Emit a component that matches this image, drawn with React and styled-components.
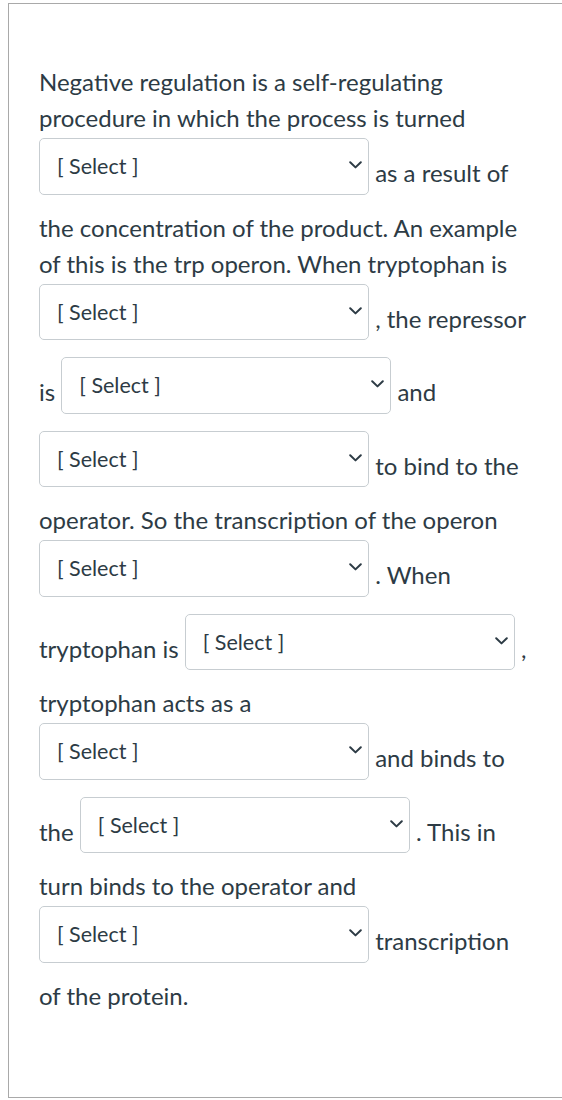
import React from "react";
import styled, { createGlobalStyle } from "styled-components";

const GlobalStyle = createGlobalStyle`
  html, body {
    margin: 0;
    padding: 0;
    background: #ffffff;
    overflow: hidden;
  }
  body {
    font-family: Lato, "Open Sans", Arial, sans-serif;
  }
`;

const Frame = styled.div`
  margin: 3px 0 0 8px;
  width: 620px;
  height: 1095px;
  box-sizing: border-box;
  border-top: 1px solid #a9a9a9;
  border-left: 1px solid #a9a9a9;
  border-bottom: 1px solid #a9a9a9;
  padding: 60px 0 0 30px;
`;

const Question = styled.p`
  margin: 0;
  width: 496px;
  font-family: Lato, "Open Sans", Arial, sans-serif;
  font-size: 24px;
  line-height: 36px;
  color: #2d3b45;
`;

/* overflow: hidden puts the baseline of the inline-block at its bottom margin
   edge, so the drop-down sits centred on the text line's strut */
const SelectWrap = styled.span`
  position: relative;
  display: inline-block;
  overflow: hidden;
  vertical-align: -27.3px;
  width: 330px;
  height: 56.5px;
  margin: 2px 0 15px;
`;

const Select = styled.select`
  appearance: none;
  -webkit-appearance: none;
  display: block;
  width: 100%;
  height: 100%;
  box-sizing: border-box;
  margin: 0;
  padding: 0 36px 0 17px;
  border: 1px solid #c7cdd1;
  border-radius: 5px;
  background: #ffffff;
  font-family: Lato, "Open Sans", Arial, sans-serif;
  font-size: 21.5px;
  color: #2d3b45;
  outline: none;
`;

const Chevron = styled.svg`
  position: absolute;
  right: 7px;
  top: 50%;
  width: 13px;
  height: 8px;
  margin-top: -5px;
  pointer-events: none;
`;

function Dropdown() {
  return (
    <SelectWrap>
      <Select defaultValue="">
        <option value="">[ Select ]</option>
      </Select>
      <Chevron viewBox="0 0 13 8" aria-hidden="true">
        <path
          d="M1.2 1.2 L6.5 6.4 L11.8 1.2"
          fill="none"
          stroke="#2d3b45"
          strokeWidth="2"
          strokeLinecap="round"
          strokeLinejoin="round"
        />
      </Chevron>
    </SelectWrap>
  );
}

export default function App() {
  return (
    <>
      <GlobalStyle />
      <Frame>
        <Question>
          Negative regulation is a self-regulating procedure in which the
          process is turned <Dropdown /> as a result of the concentration of
          the product. An example of this is the trp operon. When tryptophan
          is <Dropdown /> , the repressor is <Dropdown /> and <Dropdown /> to
          bind to the operator. So the transcription of the operon{" "}
          <Dropdown /> . When tryptophan is <Dropdown /> , tryptophan acts as a{" "}
          <Dropdown /> and binds to the <Dropdown /> . This in turn binds to
          the operator and <Dropdown /> transcription of the protein.
        </Question>
      </Frame>
    </>
  );
}
